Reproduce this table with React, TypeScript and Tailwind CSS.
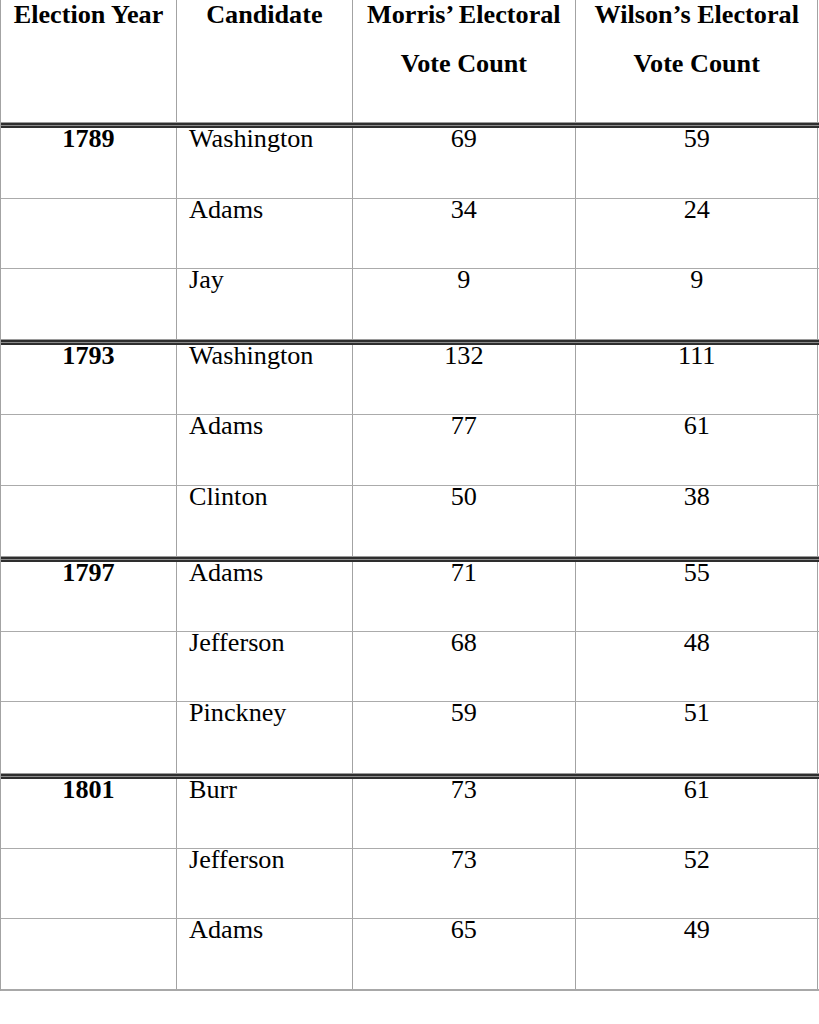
import React from 'react';

type Row = { candidate: string; morris: number; wilson: number };
type Group = { year: string; rows: Row[] };

const groups: Group[] = [
    {
        year: '1789',
        rows: [
            { candidate: 'Washington', morris: 69, wilson: 59 },
            { candidate: 'Adams', morris: 34, wilson: 24 },
            { candidate: 'Jay', morris: 9, wilson: 9 },
        ],
    },
    {
        year: '1793',
        rows: [
            { candidate: 'Washington', morris: 132, wilson: 111 },
            { candidate: 'Adams', morris: 77, wilson: 61 },
            { candidate: 'Clinton', morris: 50, wilson: 38 },
        ],
    },
    {
        year: '1797',
        rows: [
            { candidate: 'Adams', morris: 71, wilson: 55 },
            { candidate: 'Jefferson', morris: 68, wilson: 48 },
            { candidate: 'Pinckney', morris: 59, wilson: 51 },
        ],
    },
    {
        year: '1801',
        rows: [
            { candidate: 'Burr', morris: 73, wilson: 61 },
            { candidate: 'Jefferson', morris: 73, wilson: 52 },
            { candidate: 'Adams', morris: 65, wilson: 49 },
        ],
    },
];

const cols = 'grid grid-cols-[176px_175.7px_223.3px_242.5px]';
const cell = 'border-r border-[#a3a3a3]';

function DoubleRule() {
    return (
        <div className="h-[6px] w-full bg-[linear-gradient(to_bottom,#9a9a9a_0,#9a9a9a_1px,#2e2e2e_1px,#2e2e2e_3px,#8c8c8c_3px,#8c8c8c_4px,#2e2e2e_4px,#2e2e2e_6px)]" />
    );
}

export default function App() {
    return (
        <div className="w-[819px] bg-white text-black font-['Liberation_Serif','Times_New_Roman',serif] text-[26.2px] leading-[22.3px]">
            <div className="w-[818.5px] border-l border-[#a3a3a3]">
                {/* Header */}
                <div className={`${cols} h-[122.3px] font-bold leading-[29px]`}>
                    <div className={`${cell} text-center`}>Election Year</div>
                    <div className={`${cell} text-center`}>Candidate</div>
                    <div className={`${cell} text-center`}>
                        <div>Morris’ Electoral</div>
                        <div className="mt-[20px]">Vote Count</div>
                    </div>
                    <div className={`${cell} text-center`}>
                        <div>Wilson’s Electoral</div>
                        <div className="mt-[20px]">Vote Count</div>
                    </div>
                </div>

                {groups.map((g) => (
                    <div key={g.year}>
                        <DoubleRule />
                        {g.rows.map((r, i) => (
                            <div
                                key={i}
                                className={`${cols} h-[70.25px] ${i < 2 ? 'border-b border-[#ababab]' : ''}`}
                            >
                                <div className={`${cell} text-center font-bold`}>{i === 0 ? g.year : ''}</div>
                                <div className={`${cell} pl-[12px]`}>{r.candidate}</div>
                                <div className={`${cell} text-center`}>{r.morris}</div>
                                <div className={`${cell} text-center`}>{r.wilson}</div>
                            </div>
                        ))}
                    </div>
                ))}
                <div className="h-[2px] bg-[#a8a8a8]" />
            </div>
            <div className="h-[32px]" />
        </div>
    );
}
